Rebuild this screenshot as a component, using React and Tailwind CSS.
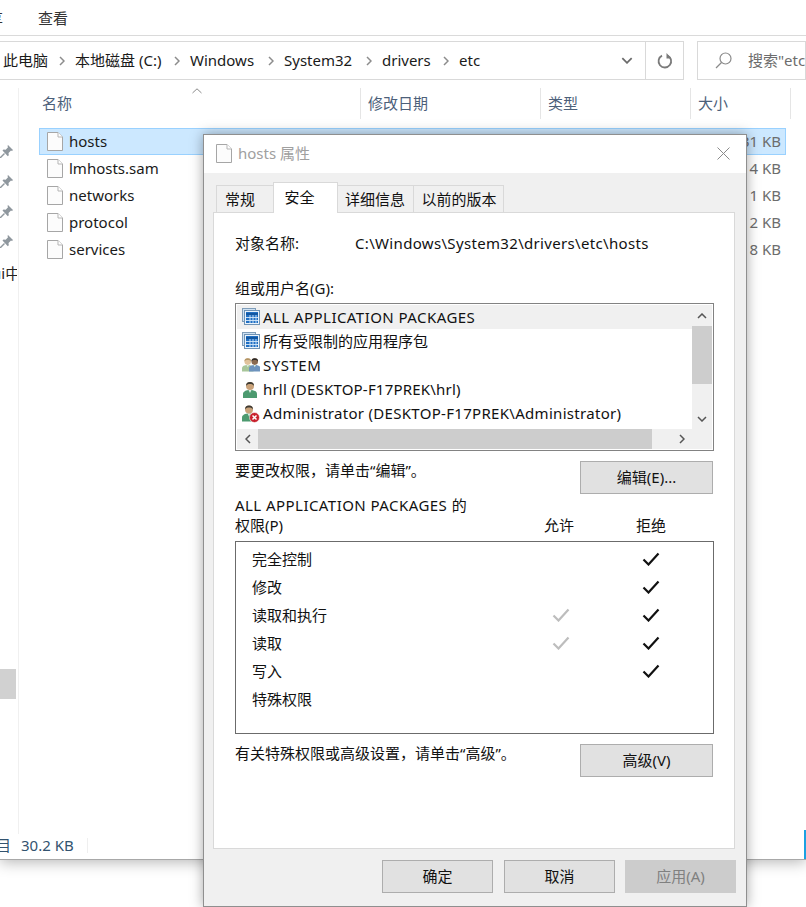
const FileIcon = ({ className = "" }) => (
  <svg width="16" height="19" viewBox="0 0 16 19" className={className}>
    <path d="M.5.5h10.500l4.500 4.500v13.500h-15z" fill="#fcfcfc" stroke="#a6a6a6" />
    <path d="M11 .5v4.500h4.500" fill="#fff" stroke="#b5b5b5" />
  </svg>
);

const Pin = () => (
  <svg width="13" height="13" viewBox="0 0 13 13">
    <path d="M8 0l5 5-1 1-1-.5-2.500 2.500.3 2.200-1 1L2.500 5.500l1-1 2.200.3L8 2.300 7.500 1z" fill="#8f979e" />
    <path d="M4.500 8.500L0 13" stroke="#8f979e" strokeWidth="1.400" />
  </svg>
);

const Check = ({ color = "#111" }) => (
  <svg width="18" height="14" viewBox="0 0 18 14">
    <path d="M1.500 7.500l5 5L16.500 1.500" fill="none" stroke={color} strokeWidth="2.200" />
  </svg>
);

const Chevron = ({ dir = "right", className = "" }) => {
  const d = {
    right: "M1 1l4 4-4 4",
    left: "M5 1L1 5l4 4",
  }[dir];
  return (
    <svg width="6" height="10" viewBox="0 0 6 10" className={className}>
      <path d={d} fill="none" stroke="currentColor" strokeWidth="1.500" />
    </svg>
  );
};

const ChevronV = ({ up, className = "" }) => (
  <svg width="10" height="6" viewBox="0 0 10 6" className={className}>
    <path d={up ? "M1 5l4-4 4 4" : "M1 1l4 4 4-4"} fill="none" stroke="currentColor" strokeWidth="1.500" />
  </svg>
);

const PackageIcon = () => (
  <svg width="18" height="18" viewBox="0 0 18 18">
    <rect x=".5" y=".5" width="13" height="13" fill="#cfe2f3" stroke="#7f9db9" />
    <rect x="2.500" y="2.500" width="15" height="14" fill="#eaf3fb" stroke="#6f93b5" />
    <rect x="4" y="4" width="12" height="11" fill="#1f6fc4" />
    <path d="M4 6h12" stroke="#0f4f96" strokeWidth="1.500" />
    <path d="M8 7v8M11 7v8M14 7v8M4 9.500h12M4 12.500h12" stroke="#d5e8f8" strokeWidth=".9" />
  </svg>
);

const Person = ({ body = "#4c9a6f", skin = "#c9a27a", hair = "#3c3a34" }) => (
  <g>
    <path d="M0 17v-4C0 10.500 3 9 7 9s7 1.500 7 4v4z" fill={body} />
    <path d="M5.500 9l1.500 3 1.500-3z" fill="#dbeee2" />
    <circle cx="7" cy="5" r="4" fill={skin} />
    <path d="M3 5a4 4 0 0 1 8 0c-1-1.500-2-2-4-2S4 3.500 3 5z" fill={hair} />
  </g>
);

const UserIcon = ({ denied }) => (
  <svg width="18" height="19" viewBox="0 0 18 19">
    <g transform={denied ? "translate(0 .5)" : "translate(1 1)"}>
      <Person />
    </g>
    {denied && (
      <g>
        <circle cx="12.500" cy="13.500" r="5" fill="#c8202c" stroke="#fff" strokeWidth=".6" />
        <path d="M10.500 11.500l4 4M14.500 11.500l-4 4" stroke="#fff" strokeWidth="1.500" />
      </g>
    )}
  </svg>
);

const GroupIcon = () => (
  <svg width="18" height="18" viewBox="0 0 18 18">
    <g transform="translate(0 1.500) scale(.82)">
      <Person body="#a8c69a" skin="#e0c39c" hair="#b39566" />
    </g>
    <g transform="translate(7 1.500) scale(.82)">
      <Person body="#6d93bd" skin="#8a6a50" hair="#2e2a28" />
    </g>
  </svg>
);

const Button = ({ children, disabled, className = "" }) => (
  <div
    className={`flex h-[33px] shrink-0 items-center justify-center border ${
      disabled ? "border-[#cccccc] bg-[#cccccc] text-[#808080]" : "border-[#adadad] bg-[#e1e1e1] text-[#111]"
    } ${className}`}
  >
    {children}
  </div>
);

const crumbs = [
  { label: "此电脑", width: "w-[72px]" },
  { label: "本地磁盘 (C:)", width: "w-[115px]" },
  { label: "Windows", width: "w-[94px]" },
  { label: "System32", width: "w-[98px]" },
  { label: "drivers", width: "w-[77px]" },
  { label: "etc", width: "" },
];

const columns = [
  { label: "名称", width: "w-[319px]" },
  { label: "修改日期", width: "w-[180px]" },
  { label: "类型", width: "w-[150px]" },
  { label: "大小", width: "w-[100px]" },
];

const files = [
  { name: "hosts", size: "31 KB", selected: true },
  { name: "lmhosts.sam", size: "4 KB" },
  { name: "networks", size: "1 KB" },
  { name: "protocol", size: "2 KB" },
  { name: "services", size: "18 KB" },
];

const principals = [
  { name: "ALL APPLICATION PACKAGES", icon: <PackageIcon />, active: true, tracking: "tracking-[0.45px]" },
  { name: "所有受限制的应用程序包", icon: <PackageIcon />, tracking: "" },
  { name: "SYSTEM", icon: <GroupIcon />, tracking: "tracking-[0.5px]" },
  { name: "hrll (DESKTOP-F17PREK\\hrl)", icon: <UserIcon />, tracking: "tracking-[0.2px]" },
  { name: "Administrator (DESKTOP-F17PREK\\Administrator)", icon: <UserIcon denied />, tracking: "tracking-[0.3px]" },
];

const permissions = [
  { name: "完全控制", deny: true },
  { name: "修改", deny: true },
  { name: "读取和执行", allow: true, deny: true },
  { name: "读取", allow: true, deny: true },
  { name: "写入", deny: true },
  { name: "特殊权限" },
];

const Explorer = () => (
  <div className="flex h-[859px] w-[806px] flex-col overflow-hidden bg-white shadow-[0_1px_0_#a8a8a8,0_3px_14px_rgba(0,0,0,0.3)]">
    {/* ribbon tabs */}
    <div className="flex h-[36px] shrink-0 items-center border-b border-[#dadada] pt-[2px] text-[#333]">
      <span className="-ml-[27px] w-[65px]">共享</span>
      <span>查看</span>
    </div>

    {/* address + search */}
    <div className="mt-[5px] flex h-[39px] shrink-0">
      <div className="-ml-px flex w-[685px] shrink-0 items-center border border-[#d9d9d9] pl-[3px] text-[#1a1a1a]">
        {crumbs.map((c, i) => (
          <div key={c.label} className={`flex items-center ${c.width}`}>
            <span className="whitespace-nowrap">{c.label}</span>
            {i < crumbs.length - 1 && <Chevron className="ml-auto mr-[10px] text-[#8c8c8c]" />}
          </div>
        ))}
        <ChevronV className="ml-auto mr-[12px] h-[7px] w-[12px] text-[#6b6b6b]" />
        <div className="flex h-full w-[38px] shrink-0 items-center justify-center border-l border-[#d9d9d9]">
          <svg width="16" height="16" viewBox="0 0 16 16">
            <path d="M10.500 2.500a6.300 6.300 0 1 1-5.500.1" fill="none" stroke="#7a7a7a" strokeWidth="1.800" />
            <path d="M9.500 0v5.500h5z" fill="#7a7a7a" />
          </svg>
        </div>
      </div>
      <div className="ml-[13px] flex min-w-0 flex-1 items-center overflow-hidden border border-[#d9d9d9] pl-[17px] text-[#6d6d6d]">
        <svg width="17" height="17" viewBox="0 0 17 17" className="shrink-0">
          <circle cx="10.500" cy="6.500" r="5.500" fill="none" stroke="#8a8a8a" strokeWidth="1.200" />
          <path d="M6.500 10.500L1 16" stroke="#8a8a8a" strokeWidth="1.200" />
        </svg>
        <span className="ml-[16px] whitespace-nowrap">搜索"etc"</span>
      </div>
    </div>

    {/* nav + list */}
    <div className="flex min-h-0 flex-1">
      <div className="relative mt-[8px] w-[19px] shrink-0 border-r border-[#f0f0f0]">
        <div className="flex flex-col gap-[17px] pt-[57px]">
          {[0, 1, 2, 3].map((n) => (
            <Pin key={n} />
          ))}
        </div>
        <div className="mt-[15px] -ml-[8px] flex h-[20px] w-[25px] items-center overflow-hidden whitespace-nowrap leading-none text-[#222]">
          ui中
        </div>
        <div className="mt-[386px] h-[30px] w-[16px] bg-[#d1d1d1]" />
      </div>

      <div className="flex min-w-0 flex-1 flex-col">
        <div className="relative mt-[8px] flex h-[31px] shrink-0 pl-[23px] text-[#4c607a]">
          <svg width="10" height="6" viewBox="0 0 10 6" className="absolute left-[173px] top-0">
            <path d="M.5 5L5 .8 9.500 5" fill="none" stroke="#8a8a8a" />
          </svg>
          {columns.map((c) => (
            <div key={c.label} className={`flex items-center border-r border-[#e5e5e5] ${c.width}`}>
              <span className={c.label === "名称" ? "" : "pl-[7px]"}>{c.label}</span>
            </div>
          ))}
        </div>

        <div className="mt-[9px] flex flex-col pl-[20px]">
          {files.map((f) => (
            <div
              key={f.name}
              className={`flex h-[27px] w-[747px] items-center border pl-[7px] pr-[4px] ${
                f.selected ? "border-[#99d1ff] bg-[#cce8ff]" : "border-transparent"
              }`}
            >
              <FileIcon className="shrink-0" />
              <span className="ml-[6px] text-[#1a1a1a]">{f.name}</span>
              <span className="ml-auto text-[#6d6d6d]">{f.size}</span>
            </div>
          ))}
        </div>
      </div>
    </div>

    {/* status bar */}
    <div className="flex h-[25px] shrink-0 items-center pb-[3px] text-[#33536f]">
      <span className="-ml-[4px] w-[25px]">目</span>
      <span>30.2 KB</span>
      <div className="ml-[13px] h-[15px] border-l border-[#efefef]" />
      <div className="-mb-[3px] ml-auto h-[29px] w-[2px] shrink-0 self-end border-l-2 border-[#1ba1e2] bg-[#d9f0ff]" />
    </div>
  </div>
);

const PropertiesDialog = () => (
  <div className="absolute left-[203px] top-[134px] flex h-[773px] w-[544px] flex-col border border-[#8f8f8f] bg-[#f0f0f0] shadow-[0_0_12px_rgba(0,0,0,0.35)]">
    {/* title bar */}
    <div className="flex h-[38px] shrink-0 items-center bg-white pb-px pl-[12px] pr-[16px] text-[#a0a0a0]">
      <FileIcon />
      <span className="ml-[6px]">hosts 属性</span>
      <svg width="13" height="13" viewBox="0 0 13 13" className="ml-auto">
        <path d="M.5.5l12 12M12.500.5l-12 12" stroke="#8a8a8a" />
      </svg>
    </div>

    {/* tabs */}
    <div className="relative z-10 mt-[9px] flex h-[31px] shrink-0 items-end pl-[12px] text-[#111]">
      <div className="flex h-[28px] w-[58px] items-center justify-center border border-b-0 border-[#d9d9d9] pr-[10px]">常规</div>
      <div className="flex h-[31px] w-[65px] -ml-px items-start justify-center border border-b-0 border-[#d9d9d9] bg-white pr-[12px] pt-[3px]">安全</div>
      <div className="flex h-[28px] w-[77px] -ml-px items-center justify-center border border-b-0 border-l-0 border-[#d9d9d9]">详细信息</div>
      <div className="flex h-[28px] w-[90px] items-center justify-center border border-b-0 border-l-0 border-[#d9d9d9] pl-px">以前的版本</div>
    </div>

    {/* panel */}
    <div className="-mt-px ml-[9px] flex h-[637px] w-[522px] shrink-0 flex-col border border-[#d9d9d9] bg-white pl-[21px] text-[#111]">
      <div className="mt-[20px] flex h-[20px] items-center">
        <span className="w-[120px]">对象名称:</span>
        <span className="whitespace-nowrap tracking-[0.33px]">C:\Windows\System32\drivers\etc\hosts</span>
      </div>

      <div className="mt-[25px] flex h-[20px] items-center">组或用户名(G):</div>

      {/* principals list */}
      <div className="mt-[5px] flex h-[148px] w-[479px] flex-col border border-[#828282] p-px">
        <div className="flex min-h-0 flex-1">
          <div className="flex min-w-0 flex-1 flex-col overflow-hidden pl-[4px]">
            {principals.map((p) => (
              <div key={p.name} className={`-ml-[4px] flex h-[24px] shrink-0 items-center whitespace-nowrap pl-[5px] ${p.active ? "bg-[#f0f0f0]" : ""}`}>
                <span className="flex w-[21px] shrink-0">{p.icon}</span>
                <span className={p.tracking}>{p.name}</span>
              </div>
            ))}
          </div>
          <div className="flex w-[20px] shrink-0 flex-col bg-[#f0f0f0] text-[#555]">
            <div className="flex h-[21px] items-center justify-center">
              <ChevronV up />
            </div>
            <div className="h-[58px] bg-[#cdcdcd]" />
            <div className="mt-auto flex h-[21px] items-center justify-center">
              <ChevronV />
            </div>
          </div>
        </div>
        <div className="flex h-[20px] shrink-0 bg-[#f0f0f0] text-[#555]">
          <div className="flex w-[21px] items-center justify-center">
            <Chevron dir="left" />
          </div>
          <div className="w-[394px] bg-[#cdcdcd]" />
          <div className="flex flex-1 items-center justify-center">
            <Chevron />
          </div>
        </div>
      </div>

      <div className="mt-[10px] flex w-[478px] items-start justify-between">
        <span className="mt-[-2px]">要更改权限，请单击“编辑”。</span>
        <Button className="w-[133px]">编辑(E)...</Button>
      </div>

      {/* permissions */}
      <div className="mt-[1px] flex h-[40px] w-[479px]">
        <div className="flex w-[309px] flex-col justify-end leading-[20px]">
          <span className="tracking-[0.45px]">ALL APPLICATION PACKAGES 的</span>
          <span>权限(P)</span>
        </div>
        <div className="flex w-[92px] items-end leading-[20px]">允许</div>
        <div className="flex items-end leading-[20px]">拒绝</div>
      </div>
      <div className="mt-[6px] flex h-[193px] w-[479px] flex-col border border-[#6b6b6b] pt-[3px]">
        {permissions.map((p) => (
          <div key={p.name} className="flex h-[28px] shrink-0 items-center pl-[16px]">
            <span className="w-[300px]">{p.name}</span>
            <span className="flex w-[90px] justify-start">{p.allow && <Check color="#bdbdbd" />}</span>
            <span className="flex">{p.deny && <Check />}</span>
          </div>
        ))}
      </div>

      <div className="mt-[10px] flex w-[478px] items-start justify-between">
        <span className="mt-[-2px]">有关特殊权限或高级设置，请单击“高级”。</span>
        <Button className="w-[133px]">高级(V)</Button>
      </div>
    </div>

    {/* footer buttons */}
    <div className="mt-[11px] flex justify-end gap-[10px] pr-[10px]">
      <Button className="mr-px w-[111px]">确定</Button>
      <Button className="w-[111px]">取消</Button>
      <Button disabled className="w-[111px]">应用(A)</Button>
    </div>
  </div>
);

export default function App() {
  return (
    <div className="relative h-[907px] w-[806px] overflow-hidden bg-white font-[family-name:'Noto_Sans','Noto_Sans_CJK_SC',sans-serif] text-[15px]">
      <Explorer />
      <PropertiesDialog />
    </div>
  );
}
